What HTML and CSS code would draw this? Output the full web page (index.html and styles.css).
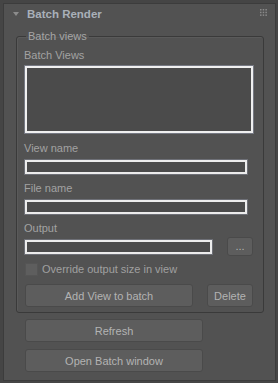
FILE: index.html
```html
<!DOCTYPE html>
<html lang="en">
<head>
    <meta charset="UTF-8">
    <meta name="viewport" content="width=device-width, initial-scale=1.0">
    <title>Batch Render</title>
    <link rel="stylesheet" href="styles.css">
</head>
<body>
    <div class="rollout">
        <div class="rollout-head">
            <span class="arrow"></span>
            <span class="title">Batch Render</span>
            <svg class="grip" width="7" height="7" viewBox="0 0 7 7">
                <rect x="0" y="0" width="1.5" height="1.5"/>
                <rect x="2.7" y="0" width="1.5" height="1.5"/>
                <rect x="5.4" y="0" width="1.5" height="1.5"/>
                <rect x="0" y="2.7" width="1.5" height="1.5"/>
                <rect x="2.7" y="2.7" width="1.5" height="1.5"/>
                <rect x="5.4" y="2.7" width="1.5" height="1.5"/>
                <rect x="0" y="5.4" width="1.5" height="1.5"/>
                <rect x="2.7" y="5.4" width="1.5" height="1.5"/>
                <rect x="5.4" y="5.4" width="1.5" height="1.5"/>
            </svg>
        </div>

        <fieldset class="group">
            <legend>Batch views</legend>
            <div class="label first">Batch Views</div>
            <div class="listbox"></div>

            <div class="label">View name</div>
            <div class="textbox"></div>

            <div class="label">File name</div>
            <div class="textbox"></div>

            <div class="label">Output</div>
            <div class="output-row">
                <div class="textbox output"></div>
                <button class="btn browse">...</button>
            </div>

            <label class="check">
                <span class="box"></span>
                Override output size in view
            </label>

            <div class="btn-row">
                <button class="btn add">Add View to batch</button>
                <button class="btn del">Delete</button>
            </div>
        </fieldset>

        <button class="btn wide refresh">Refresh</button>
        <button class="btn wide open">Open Batch window</button>
    </div>
</body>
</html>
```

FILE: styles.css
```css
* {
    box-sizing: border-box;
}

body {
    margin: 0;
    background: #454545;
    font-family: 'Liberation Sans', Arial, sans-serif;
    font-size: 11px;
    color: #a2a2a2;
}

.rollout {
    margin: 3px 0 0 3px;
    width: 273px;
    height: 378px;
    background: #525252;
    border: 1px solid #3c3c3c;
    display: flex;
    flex-direction: column;
    align-items: flex-start;
}

.rollout-head {
    width: 100%;
    height: 19px;
    display: flex;
    align-items: center;
    padding-left: 9px;
}

.arrow {
    width: 0;
    height: 0;
    border-left: 3px solid transparent;
    border-right: 3px solid transparent;
    border-top: 4px solid #8c8c8c;
    margin-right: 8px;
}

.title {
    font-weight: bold;
    font-size: 11.5px;
    color: #a9b0b9;
}

.grip {
    margin-left: auto;
    margin-right: 8px;
    margin-top: -2px;
    fill: #8a8a8a;
}

.group {
    margin: 6px 0 0 12px;
    width: 248px;
    padding: 5px 9px 5px 7px;
    border: 1px solid #3a3a3a;
    border-radius: 3px;
    box-shadow: inset 1px 1px 0 #5a5a5a;
    min-width: 0;
}

.group legend {
    padding: 0 2px;
    margin-left: 2px;
    line-height: 14px;
    color: #a6a6a6;
}

.label {
    line-height: 14px;
    margin-bottom: 4px;
}

.label.first {
    margin-bottom: 3px;
}

.listbox {
    height: 69px;
    width: 230px;
    background: #4b4b4b;
    border: 1px solid #767983;
    box-shadow: inset 0 0 0 2px #f0f0f0;
    margin-bottom: 7px;
}

.textbox {
    height: 16px;
    width: 224px;
    background: #4b4b4b;
    border: 1px solid #6d6f76;
    box-shadow: inset 0 0 0 2px #ececec;
    margin-bottom: 6px;
}

.output-row {
    display: flex;
    align-items: center;
    gap: 14px;
    margin-top: -2px;
}

.textbox.output {
    width: 189px;
    margin-bottom: 0;
}

.btn {
    font-family: 'Liberation Sans', Arial, sans-serif;
    font-size: 11px;
    color: #b3b3b3;
    background: #5d5d5d;
    border: 1px solid #4a4a4a;
    border-radius: 3px;
    padding: 0;
}

.browse {
    width: 26px;
    height: 19px;
    line-height: 15px;
}

.check {
    display: flex;
    align-items: center;
    gap: 4px;
    margin: 7px 0 0 1px;
    line-height: 13px;
    color: #a0a0a0;
}

.check .box {
    width: 13px;
    height: 13px;
    background: #5e5e5e;
    border: 1px solid #555;
}

.btn-row {
    display: flex;
    gap: 14px;
    margin: 8px 0 0 1px;
}

.btn-row .btn {
    height: 23px;
}

.add {
    width: 168px;
}

.del {
    width: 46px;
}

.wide {
    width: 178px;
    height: 23px;
    margin-left: 21px;
}

.refresh {
    margin-top: 6px;
}

.open {
    margin-top: 7px;
}
```
